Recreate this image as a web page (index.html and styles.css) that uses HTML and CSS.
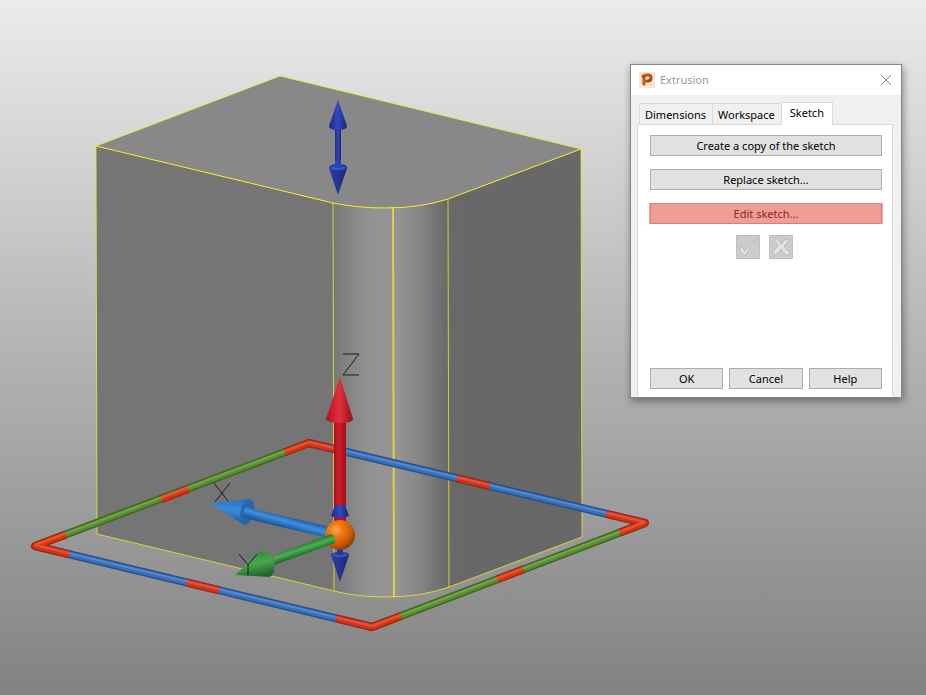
FILE: index.html
```html
<!doctype html>
<html lang="en">
  <head>
    <meta charset="UTF-8" />
    <meta name="viewport" content="width=device-width, initial-scale=1.0" />
    <title>Extrusion</title>
    <link rel="stylesheet" href="styles.css">
  </head>
  <body>
    <main class="viewport">
      <svg class="scene" viewBox="0 0 926 695" preserveAspectRatio="xMidYMid slice" role="img" aria-label="Extruded solid with workspace axes">
        <defs>
          <linearGradient id="fillet" x1="333" x2="461" y1="0" y2="0" gradientUnits="userSpaceOnUse">
            <stop offset="0" stop-color="#777" />
            <stop offset="0.12" stop-color="#848484" />
            <stop offset="0.3" stop-color="#939393" />
            <stop offset="0.5" stop-color="#949494" />
            <stop offset="0.65" stop-color="#888" />
            <stop offset="0.88" stop-color="#6b6b6b" />
            <stop offset="1" stop-color="#686868" />
          </linearGradient>
          <linearGradient id="navy">
            <stop offset="0" stop-color="#1d2b80" />
            <stop offset="0.5" stop-color="#3148c4" />
            <stop offset="1" stop-color="#1a2570" />
          </linearGradient>
          <linearGradient id="navy-dark">
            <stop offset="0" stop-color="#2c3ca0" />
            <stop offset="0.5" stop-color="#263694" />
            <stop offset="1" stop-color="#1c2668" />
          </linearGradient>
          <linearGradient id="red">
            <stop offset="0" stop-color="#b3101d" />
            <stop offset="0.5" stop-color="#e0303c" />
            <stop offset="1" stop-color="#980e18" />
          </linearGradient>
          <linearGradient id="red-shaft">
            <stop offset="0" stop-color="#a30e1a" />
            <stop offset="0.4" stop-color="#d01c28" />
            <stop offset="1" stop-color="#a00e18" />
          </linearGradient>
          <linearGradient id="sky" x1="0.6" x2="0.4" y1="0" y2="1">
            <stop offset="0" stop-color="#2c70ba" />
            <stop offset="0.4" stop-color="#3b8bdc" />
            <stop offset="1" stop-color="#1b508c" />
          </linearGradient>
          <linearGradient id="sky-shaft" x1="288" x2="285" y1="517" y2="528" gradientUnits="userSpaceOnUse">
            <stop offset="0" stop-color="#2464a8" />
            <stop offset="0.4" stop-color="#3f90e2" />
            <stop offset="1" stop-color="#1c5494" />
          </linearGradient>
          <linearGradient id="green" x1="0.3" x2="0.6" y1="0" y2="1">
            <stop offset="0" stop-color="#2f8535" />
            <stop offset="0.5" stop-color="#48a84c" />
            <stop offset="1" stop-color="#1e6225" />
          </linearGradient>
          <linearGradient id="green-shaft" x1="302" x2="305" y1="545" y2="554" gradientUnits="userSpaceOnUse">
            <stop offset="0" stop-color="#2d8434" />
            <stop offset="0.4" stop-color="#4bb151" />
            <stop offset="1" stop-color="#216b28" />
          </linearGradient>
          <radialGradient id="ball" cx="0.37" cy="0.32" r="0.7">
            <stop offset="0" stop-color="#ffac50" />
            <stop offset="0.3" stop-color="#f37a15" />
            <stop offset="0.7" stop-color="#cf5c08" />
            <stop offset="1" stop-color="#8b3d08" />
          </radialGradient>
          <g id="frame">
            <path class="blue" d="M309 443l336 80M372 627L35 546" />
            <path class="olive" d="M35 546l274-103M645 523L372 627" />
            <path class="red" d="M175 494l134-51 336 80-273 104-337-81 140-52" stroke-dasharray="14 103 63 115 34 120 67 103 28 103 68 120 34 120 68 102 14" />
          </g>
        </defs>

        <!-- solid -->
        <path fill="#888" d="M96 146 280 76l301 73-133 50q-28 9-63 9-28 0-52-5z" />
        <path fill="#757575" d="M96 146l237 57 1 388L97 534z" />
        <path fill="#686868" d="M448 199l133-50 1 388-133 50z" />
        <path fill="url(#fillet)" d="M333 203q24 5 52 5 35 0 63-9l13-5 1 388-13 5q-28 10-63 10-28 0-52-6z" />
        <g class="edges">
          <path class="faint" d="M96 146 280 76l301 73" />
          <path d="M96 146l237 57q24 5 52 5 35 0 63-9l133-50" />
          <path class="faint" d="M96 146l1 388 237 57q24 6 52 6 35 0 63-10l133-50-1-388M333 203l1 388M448 199l1 388" />
          <path class="seam" d="M393 208l1 389" />
        </g>

        <!-- workspace frame -->
        <use href="#frame" class="tube dark" />
        <use href="#frame" class="tube mid" />
        <use href="#frame" class="tube light" y="-1" />

        <!-- height handle -->
        <path fill="url(#navy)" d="M335 127h6v42h-6z" />
        <path fill="url(#navy)" d="M338 100l9 26q0 4-9 4t-9-4z" />
        <path fill="url(#navy-dark)" d="M329 168q0-4 9-4t9 4l-9 27z" />
        <ellipse cx="338" cy="168" rx="8" ry="2" fill="#3655d4" />
        <path fill="#2b41b4" d="M335 160h6v8h-6z" />

        <!-- X axis -->
        <ellipse cx="247" cy="512" rx="7" ry="13" fill="#2568ae" transform="rotate(12 247 512)" />
        <path fill="url(#sky)" d="M210 503l38-4q-6 4-8 14 0 8 4 12z" />
        <path fill="url(#sky-shaft)" d="M246 507l85 20-3 11-84-20q-2-6 2-11z" />

        <!-- Z axis -->
        <path fill="url(#red-shaft)" d="M334 420h12v104h-12z" />
        <path fill="url(#red)" d="M340 377l13 42q0 4-13 4t-14-4z" />
        <path fill="url(#navy)" d="M335 505h10l4 11q-9 4-18 0z" />
        <path fill="#b31420" d="M335 518h10v5h-10z" />

        <!-- lower handle -->
        <path fill="#27349b" d="M337 546h6v10h-6z" />
        <path fill="url(#navy-dark)" d="M331 555q0-3 9-3t9 3l-9 27z" />
        <ellipse cx="340" cy="555" rx="8" ry="2" fill="#3650cc" />
        <path fill="#27349b" d="M337 548h6v7h-6z" />
        <circle cx="340" cy="535" r="15" fill="url(#ball)" />

        <!-- Y axis -->
        <path fill="url(#green)" d="M235 575l24-23q4-2 8 0 8 7 7 19-1 5-5 6z" />
        <path fill="url(#green-shaft)" d="M272 556l59-22q5 2 4 9l-61 22q1-5-2-9z" />

        <g class="letters">
          <path d="M343 354h16l-16 21h16" />
          <path d="M214 483l14 18M230 483l-15 19" />
          <path d="M239 554l9 11 9-11M248 565v10" />
        </g>
      </svg>

      <section class="dialog" aria-labelledby="dialog-title">
        <header class="titlebar">
          <svg class="logo" width="16" height="16" viewBox="0 0 16 16" aria-hidden="true">
            <path fill="#fde3cc" d="M0 0h16v16H0z" />
            <path fill="none" stroke="#9c4a14" stroke-width="3" stroke-linecap="round" d="M5 12V6M4 4q2-1 5-1 3 0 3 3 0 3-4 3" />
            <path fill="none" stroke="#d9712c" stroke-width="1" d="M5 13V6M3 4q3-2 6-1 3 1 3 3" />
          </svg>
          <h1 id="dialog-title">Extrusion</h1>
          <button class="close" aria-label="Close">
            <svg width="12" height="12" viewBox="0 0 12 12" aria-hidden="true">
              <path d="M1 1l10 10M11 1 1 11" />
            </svg>
          </button>
        </header>
        <div class="tabs" role="tablist">
          <button class="tab" role="tab">Dimensions</button>
          <button class="tab" role="tab">Workspace</button>
          <button class="tab active" role="tab" aria-selected="true">Sketch</button>
        </div>
        <div class="panel" role="tabpanel">
          <div class="actions">
            <button>Create a copy of the sketch</button>
            <button>Replace sketch...</button>
            <button class="highlight">Edit sketch...</button>
          </div>
          <div class="confirm">
            <button disabled aria-label="Accept">
              <svg width="22" height="22" viewBox="0 0 22 22" aria-hidden="true">
                <path d="M2 13l3-2 3 4Q12 7 20 2 13 10 9 19H7z" />
              </svg>
            </button>
            <button disabled aria-label="Discard">
              <svg width="22" height="22" viewBox="0 0 22 22" aria-hidden="true">
                <path d="M4 5q2-4 4-2l3 5q3-5 6-5 3 1 1 3l-4 4q2 5 6 5 0 5-4 4-3-2-5-6-3 6-6 6-4-1-2-4l5-5Q7 6 4 5z" />
              </svg>
            </button>
          </div>
          <div class="buttons">
            <button>OK</button>
            <button>Cancel</button>
            <button>Help</button>
          </div>
        </div>
      </section>
    </main>
  </body>
</html>
```
FILE: styles.css
```css
* {
  box-sizing: border-box;
}

body {
  margin: 0;
  font-family: "Noto Sans", "Open Sans", sans-serif;
  font-size: 11px;
  line-height: 16px;
  color: #000;
}

button {
  font: inherit;
  color: inherit;
  padding: 0;
}

.viewport {
  position: relative;
  min-height: 100vh;
  overflow: hidden;
  background: linear-gradient(#ececec, #b4b4b4 50%, #828282);
}

.scene {
  position: absolute;
  inset: 0;
  width: 100%;
  height: 100%;
}
.edges {
  fill: none;
  stroke: #f8ee20;
}
.edges .faint {
  opacity: 0.75;
}
.edges .seam {
  stroke-width: 2px;
  opacity: 0.7;
}

.tube {
  fill: none;
  stroke-linejoin: round;
}
.tube.dark {
  --blue: #2a5088;
  --olive: #416823;
  --red: #b0240a;
  stroke-width: 8px;
}
.tube.mid {
  --blue: #3a6fb9;
  --olive: #5a8c35;
  --red: #dc300f;
  stroke-width: 5px;
}
.tube.light {
  --blue: #5088d4;
  --olive: #70a548;
  --red: #f5492a;
  stroke-width: 2px;
}
.blue {
  stroke: var(--blue);
}
.olive {
  stroke: var(--olive);
}
.red {
  stroke: var(--red);
}
.letters {
  fill: none;
  stroke: #1c1c1c;
}

.dialog {
  position: absolute;
  top: 64px;
  right: 24px;
  width: 272px;
  border: 1px solid #868686;
  background-color: #f0f0f0;
  box-shadow: 1px 3px 8px rgba(0, 0, 0, 0.4);
}
.titlebar {
  display: flex;
  align-items: center;
  gap: 5px;
  height: 30px;
  padding: 0 8px;
  background-color: #fff;
}
.titlebar h1 {
  flex: 1;
  margin: 0;
  font-size: 11px;
  font-weight: 400;
  color: #999;
}
.close {
  display: flex;
  padding: 1px;
  border: 0;
  background: none;
}
.close path {
  fill: none;
  stroke: #888;
}

.tabs {
  display: flex;
  align-items: flex-end;
  padding: 7px 8px 0;
}
.tab {
  height: 21px;
  padding: 1px 6px 0 5px;
  border: 1px solid #d9d9d9;
  border-bottom: 0;
  background-color: #f0f0f0;
}
.tab + .tab {
  border-left: 0;
}
.tab.active {
  height: 23px;
  margin-bottom: -1px;
  padding: 0 8px 2px;
  position: relative;
  background-color: #fff;
}

.panel {
  margin: 0 8px 0 6px;
  padding: 10px 10px 8px 12px;
  border: 1px solid #d9d9d9;
  border-bottom: 0;
  background-color: #fff;
}
.actions {
  display: grid;
  gap: 13px;
}
.actions button,
.buttons button {
  height: 21px;
  border: 1px solid #adadad;
  background-color: #e1e1e1;
}
.actions .highlight {
  border-color: #d47f77;
  background-color: #f09d95;
  box-shadow: 1px 0 #f5aaa3, -1px 0 #f5aaa3;
  color: #8b2626;
}
.confirm {
  display: flex;
  justify-content: center;
  gap: 9px;
  margin-top: 11px;
  padding-right: 4px;
}
.confirm button {
  display: flex;
  width: 24px;
  height: 24px;
  border: 1px solid #bfbfbf;
  background-color: #ccc;
}
.confirm path {
  fill: #e3e3e3;
  stroke: #b8b8b8;
}
.buttons {
  display: grid;
  grid-template-columns: repeat(3, 1fr);
  gap: 6px;
  margin-top: 109px;
}
```
